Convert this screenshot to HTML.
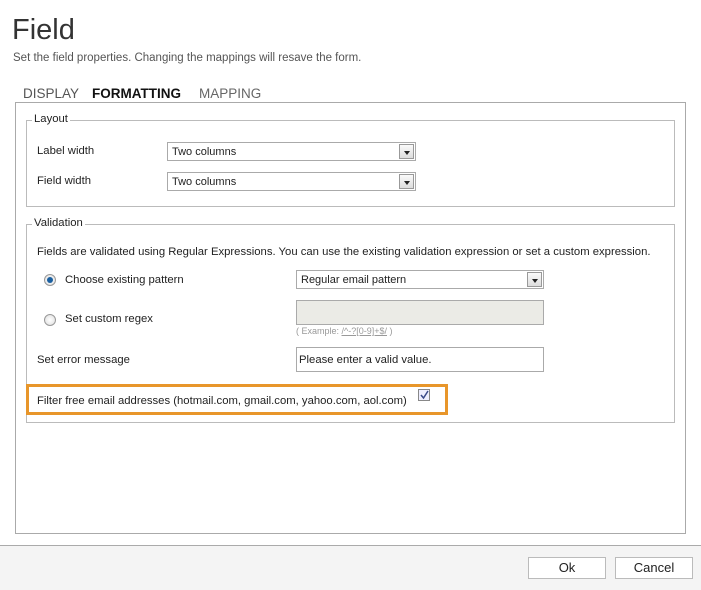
<!DOCTYPE html>
<html><head><meta charset="utf-8"><style>
*{box-sizing:border-box;margin:0;padding:0}
body{width:701px;height:590px;background:#fff;font-family:"Liberation Sans",sans-serif;position:relative;overflow:hidden;color:#222}
.a{position:absolute;white-space:nowrap}
.t{font-size:11.3px}
.sel{position:absolute;border:1px solid #aaa;background:#fff;font-size:11px;padding:3px 4px;height:19px}
.sel .ar{position:absolute;right:1px;top:1px;width:15px;height:15px;border:1px solid #999;background:linear-gradient(#fafafa,#ddd)}
.sel .ar:after{content:"";position:absolute;left:4px;top:6px;border-left:3px solid transparent;border-right:3px solid transparent;border-top:4px solid #222}
.fs{position:absolute;border:1px solid #bbb}
.lg{position:absolute;background:#fff;padding:0 2px;font-size:11.3px;top:-8px;left:5px}
.rad{position:absolute;width:12px;height:12px;border-radius:50%;border:1px solid #999;background:radial-gradient(#fff,#ddd)}
.btn{position:absolute;border:1px solid #bbb;background:#fff;font-size:13px;text-align:center;line-height:20px;height:22px}
</style></head><body>
<div class="a" style="left:12px;top:14px;font-size:29px;color:#333">Field</div>
<div class="a" style="left:13px;top:52px;font-size:11.5px;color:#555">Set the field properties. Changing the mappings will resave the form.</div>
<div class="a" style="left:23px;top:86px;font-size:13.5px;color:#555">DISPLAY</div>
<div class="a" style="left:92px;top:86px;font-size:13.5px;color:#111;font-weight:bold">FORMATTING</div>
<div class="a" style="left:199px;top:86px;font-size:13.5px;color:#666">MAPPING</div>
<div class="a" style="left:15px;top:102px;width:671px;height:432px;border:1px solid #aaa"></div>
<div class="fs" style="left:26px;top:120px;width:649px;height:87px"><div class="lg">Layout</div></div>
<div class="a t" style="left:37px;top:145px">Label width</div>
<div class="sel" style="left:167px;top:142px;width:249px">Two columns<div class="ar"></div></div>
<div class="a t" style="left:37px;top:175px">Field width</div>
<div class="sel" style="left:167px;top:172px;width:249px">Two columns<div class="ar"></div></div>
<div class="fs" style="left:26px;top:224px;width:649px;height:199px"><div class="lg">Validation</div></div>
<div class="a t" style="left:37px;top:246px">Fields are validated using Regular Expressions. You can use the existing validation expression or set a custom expression.</div>
<div class="rad" style="left:44px;top:274px"><div style="position:absolute;left:2px;top:2px;width:6px;height:6px;border-radius:50%;background:#1a5fa0"></div></div>
<div class="a t" style="left:65px;top:274px">Choose existing pattern</div>
<div class="sel" style="left:296px;top:270px;width:248px">Regular email pattern<div class="ar"></div></div>
<div class="rad" style="left:44px;top:314px"></div>
<div class="a t" style="left:65px;top:313px">Set custom regex</div>
<div class="a" style="left:296px;top:300px;width:248px;height:25px;border:1px solid #aaa;background:#ebebe6"></div>
<div class="a" style="left:296px;top:326px;font-size:9px;color:#999">( Example: <u>/^-?[0-9]+$/</u> )</div>
<div class="a t" style="left:37px;top:354px">Set error message</div>
<div class="a t" style="left:296px;top:347px;width:248px;height:25px;border:1px solid #aaa;padding:6px 2px">Please enter a valid value.</div>
<div class="a" style="left:26px;top:384px;width:422px;height:31px;border:3px solid #e8962a"></div>
<div class="a t" style="left:37px;top:395px">Filter free email addresses (hotmail.com, gmail.com, yahoo.com, aol.com)</div>
<div class="a" style="left:418px;top:389px;width:12px;height:12px;border:1px solid #888;background:#eef"><svg width="10" height="10" style="position:absolute;left:0;top:0"><path d="M2 5 L4.5 8 L9 1" stroke="#3a4a8a" stroke-width="1.5" fill="none"/></svg></div>
<div class="a" style="left:0;top:545px;width:701px;height:45px;background:#f4f4f4;border-top:1px solid #aaa"></div>
<div class="btn" style="left:528px;top:557px;width:78px">Ok</div>
<div class="btn" style="left:615px;top:557px;width:78px">Cancel</div>
</body></html>
